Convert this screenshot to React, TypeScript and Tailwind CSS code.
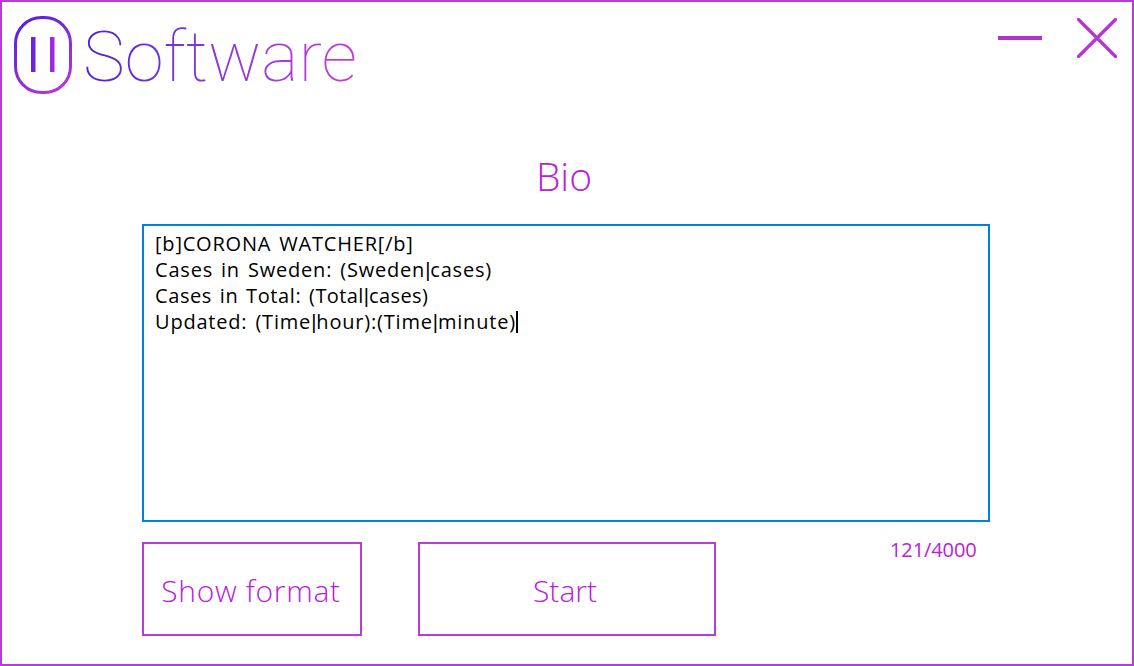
const FONT = "font-['Open_Sans','Noto_Sans',sans-serif]"

function PauseLogo() {
  return (
    <svg width="60" height="80" viewBox="0 0 60 80" fill="none" className="shrink-0">
      <defs>
        <linearGradient id="logoGrad" x1="0" y1="0" x2="60" y2="80" gradientUnits="userSpaceOnUse">
          <stop offset="0" stopColor="#4a1de0" />
          <stop offset="1" stopColor="#c23ad6" />
        </linearGradient>
      </defs>
      <rect x="2.5" y="2.5" width="55" height="75" rx="26" stroke="url(#logoGrad)" strokeWidth="3" />
      <rect x="18" y="22" width="4.5" height="35" fill="#6f22de" />
      <rect x="37" y="22" width="4.5" height="35" fill="#a325df" />
    </svg>
  )
}

// the pipe is much narrower in the original font
function Pipe() {
  return <span className="font-['Liberation_Sans',sans-serif] tracking-normal">|</span>
}

export default function App() {
  return (
    <div className={`${FONT} flex h-[666px] w-[1134px] flex-col border-2 border-[#b93cd6] bg-white`}>
      {/* Title bar */}
      <div className="flex h-[104px] shrink-0 items-start justify-between">
        <div className="flex items-start pl-[11px] pt-[13px]">
          <PauseLogo />
          <span className="ml-[10px] bg-gradient-to-r from-[#4a1de0] to-[#c93bd8] bg-clip-text font-['Roboto',sans-serif] text-[70.5px] font-thin leading-[84px] text-transparent">
            Software
          </span>
        </div>
        <div className="flex items-start">
          <div className="mr-[35px] mt-[34px] h-[4px] w-[44px] bg-[#b32fd6]" />
          <svg width="40" height="40" viewBox="0 0 40 40" className="mr-[15px] mt-[16px]">
            <path d="M1.5 1.5 L38.5 38.5 M38.5 1.5 L1.5 38.5" stroke="#b832d6" strokeWidth="3.2" strokeLinecap="round" />
          </svg>
        </div>
      </div>

      <h1 className="h-[118px] shrink-0 pr-[6px] pt-[45px] text-center text-[39px] font-[350] leading-[50px] text-[#ba20da]">
        Bio
      </h1>

      {/* Bio text box */}
      <div className="mx-[140px] h-[298px] w-[848px] shrink-0 border-2 border-[#0080e0] px-[11px] py-[5px] text-[20px] leading-[26px] tracking-[0.8px] [word-spacing:2px] text-black">
        <div>[b]CORONA WATCHER[/b]</div>
        <div>
          Cases in Sweden: (Sweden<Pipe />cases)
        </div>
        <div className="tracking-[0.6px]">
          Cases in Total: <span className="tracking-[0.4px]">(Total<Pipe />cases)</span>
        </div>
        <div className="flex items-center">
          <span>
            Updated: (Time<Pipe />hour):(Time<Pipe />minute)
          </span>
          <span className="h-[22px] w-[2px] bg-black" />
        </div>
      </div>

      {/* Actions */}
      <div className="mt-[20px] flex items-start pl-[140px]">
        <button className="h-[94px] w-[220px] border-2 border-[#b93cd6] pr-[2px] pt-[2px] text-[30px] font-[350] tracking-[0.7px] text-[#ba20da]">
          Show format
        </button>
        <button className="ml-[56px] h-[94px] w-[298px] border-2 border-[#b93cd6] pr-[4px] pt-[2px] text-[30px] font-[350] text-[#ba20da]">
          Start
        </button>
        <span className="ml-[174px] mt-[-5px] text-[20px] font-normal leading-[26px] tracking-[-0.1px] text-[#ba20da]">121/4000</span>
      </div>
    </div>
  )
}
